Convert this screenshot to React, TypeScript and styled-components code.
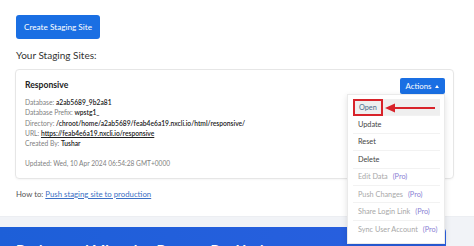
import styled, { createGlobalStyle } from 'styled-components';

const GlobalStyle = createGlobalStyle`
  body {
    margin: 0;
    background: #fff;
    font-family: Lato, "Noto Sans", sans-serif;
    color: #333;
  }
`;

type Detail = { label: string; value: string; link?: boolean };

const details: Detail[] = [
  { label: 'Database:', value: 'a2ab5689_9b2a81' },
  { label: 'Database Prefix:', value: 'wpstg1_' },
  { label: 'Directory:', value: '/chroot/home/a2ab5689/feab4e6a19.nxcli.io/html/responsive/' },
  { label: 'URL:', value: 'https://feab4e6a19.nxcli.io/responsive', link: true },
  { label: 'Created By:', value: 'Tushar' },
];

const menuItems = [
  { name: 'Open' },
  { name: 'Update' },
  { name: 'Reset' },
  { name: 'Delete' },
  { name: 'Edit Data', pro: true },
  { name: 'Push Changes', pro: true },
  { name: 'Share Login Link', pro: true },
  { name: 'Sync User Account', pro: true },
];

export default function App() {
  return (
    <>
      <GlobalStyle />
      <Page>
        <Main>
          <PrimaryButton>Create Staging Site</PrimaryButton>
          <Heading>Your Staging Sites:</Heading>
          <Card>
            <CardHeader>
              <SiteName>Responsive</SiteName>
              <ActionsWrap>
                <ActionsButton>
                  Actions <Caret />
                </ActionsButton>
                <Menu>
                  {menuItems.map((item, i) => (
                    <MenuItem key={item.name} $active={i === 0} $disabled={!!item.pro}>
                      {i === 0 ? <Highlight>{item.name}</Highlight> : item.name}
                      {item.pro && <Pro>(Pro)</Pro>}
                      {i === 0 && (
                        <Arrow width="52" height="10" viewBox="0 0 52 10">
                          <line x1="8" y1="5" x2="50" y2="5" stroke="#d8232a" strokeWidth="2" />
                          <polygon points="0,5 10,0.5 10,9.5" fill="#d8232a" />
                        </Arrow>
                      )}
                    </MenuItem>
                  ))}
                </Menu>
              </ActionsWrap>
            </CardHeader>
            <Details>
              {details.map((d) => (
                <Line key={d.label}>
                  <Label>{d.label}</Label> {d.link ? <ValueLink>{d.value}</ValueLink> : <Value>{d.value}</Value>}
                </Line>
              ))}
            </Details>
            <Updated>Updated: Wed, 10 Apr 2024 06:54:28 GMT+0000</Updated>
          </Card>
          <HowTo>
            How to: <HowToLink>Push staging site to production</HowToLink>
          </HowTo>
        </Main>
        <Band>
          <Banner>
            <BannerTitle>Backup and Migration Become Pro Hacker</BannerTitle>
          </Banner>
        </Band>
      </Page>
    </>
  );
}

const Page = styled.div`
  width: 474px;
  height: 246px;
  overflow: hidden;
  display: flex;
  flex-direction: column;
`;

const Main = styled.div`
  flex-shrink: 0;
  padding: 15px 20px 0 16px;
  display: flex;
  flex-direction: column;
  align-items: flex-start;
`;

const PrimaryButton = styled.button`
  height: 24px;
  width: 84px;
  padding: 0;
  border: none;
  border-radius: 3px;
  background: #1a6fe3;
  color: #fff;
  font-family: inherit;
  font-size: 8.2px;
  cursor: pointer;
`;

const Heading = styled.div`
  margin-top: 8px;
  font-size: 10px;
  line-height: 17px;
  color: #333;
`;

const Card = styled.div`
  margin: 5px 0 0 -1px;
  align-self: stretch;
  border: 1px solid #e6e6e6;
  border-radius: 4px;
  box-shadow: 0 1px 2px rgba(0, 0, 0, 0.04);
  padding: 8px 8px 9px 9px;
`;

const CardHeader = styled.div`
  display: flex;
  justify-content: space-between;
  align-items: center;
  height: 16px;
`;

const SiteName = styled.div`
  font-size: 8.6px;
  font-weight: 700;
  color: #222;
  margin-top: -3px;
`;

const ActionsWrap = styled.div`
  position: relative;
`;

const ActionsButton = styled.button`
  height: 16px;
  width: 45px;
  padding: 0;
  border: none;
  border-radius: 2px;
  background: #1a6fe3;
  color: #fff;
  font-family: inherit;
  font-size: 7.8px;
  display: flex;
  align-items: center;
  justify-content: center;
  gap: 4px;
`;

const Caret = styled.span`
  width: 0;
  height: 0;
  border-left: 2.5px solid transparent;
  border-right: 2.5px solid transparent;
  border-bottom: 3px solid #fff;
`;

const Menu = styled.div`
  position: absolute;
  top: 100%;
  right: 0;
  width: 98px;
  box-sizing: border-box;
  padding: 4px 4px 5px 5px;
  background: #fff;
  border: 1px solid #eaeaea;
  box-shadow: 0 2px 6px rgba(0, 0, 0, 0.12);
  z-index: 2;
`;

const MenuItem = styled.div<{ $active?: boolean; $disabled?: boolean }>`
  position: relative;
  height: 17.4px;
  box-sizing: border-box;
  display: flex;
  align-items: center;
  gap: 5px;
  padding-left: 5px;
  font-size: 7.3px;
  white-space: nowrap;
  color: ${(p) => (p.$disabled ? '#a8a8a8' : '#444')};
  background: ${(p) => (p.$active ? '#efefef' : 'transparent')};
  border-bottom: 1px solid #f2f2f2;
  &:last-child {
    border-bottom: none;
  }
`;

const Highlight = styled.span`
  margin-left: -5px;
  padding: 0 4px;
  height: 17px;
  width: 30px;
  box-sizing: border-box;
  display: flex;
  align-items: center;
  border: 2px solid #d8232a;
  color: #4a6a8a;
`;

const Arrow = styled.svg`
  position: absolute;
  left: 32px;
  top: 4px;
`;

const Pro = styled.span`
  color: #8a7fd4;
`;

const Details = styled.div`
  margin-top: 3px;
  display: flex;
  flex-direction: column;
`;

const Line = styled.div`
  font-size: 6.7px;
  line-height: 10.3px;
  white-space: nowrap;
`;

const Label = styled.span`
  color: #7f7f7f;
`;

const Value = styled.span`
  color: #222;
  font-weight: 600;
`;

const ValueLink = styled(Value)`
  text-decoration: underline;
`;

const Updated = styled.div`
  margin-top: 10px;
  font-size: 6.6px;
  line-height: 10.3px;
  color: #7f7f7f;
`;

const HowTo = styled.div`
  margin-top: 9px;
  font-size: 7.8px;
  line-height: 13px;
  color: #555;
`;

const HowToLink = styled.span`
  color: #3b6fc4;
  text-decoration: underline;
`;

const Band = styled.div`
  margin-top: 15px;
  height: 40px;
  flex-shrink: 0;
  background: #f1f3f7;
  border-top: 1px solid #eceef2;
  padding-top: 10px;
  padding-right: 28px;
  display: flex;
  flex-direction: column;
`;

const Banner = styled.div`
  flex: 1;
  background: linear-gradient(90deg, #1d5fd8, #2a5fe0);
  border-radius: 0 5px 0 0;
  padding: 14px 0 0 16px;
  overflow: hidden;
`;

const BannerTitle = styled.div`
  color: #fff;
  font-size: 14px;
  font-weight: 700;
  line-height: 17px;
  white-space: nowrap;
`;
